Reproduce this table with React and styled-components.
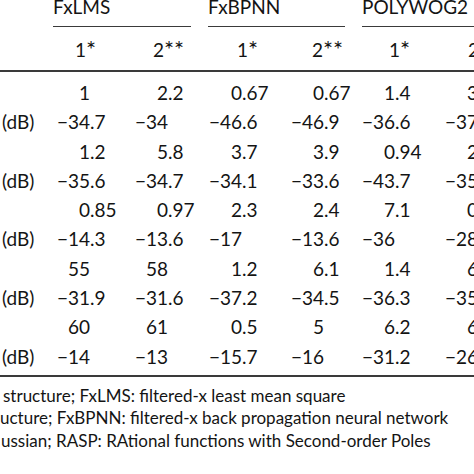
import styled, { createGlobalStyle } from 'styled-components';

const GlobalStyle = createGlobalStyle`
  html, body {
    margin: 0;
    padding: 0;
    background: #ffffff;
    overflow: hidden;
  }
  body {
    width: 474px;
    height: 474px;
    font-family: Lato, "Open Sans", sans-serif;
    color: #141414;
  }
`;

// value columns: label, then FxLMS 1/2, FxBPNN 1/2, POLYWOG2 1/2
const COLS = '50px 78px 74px 82px 71px 83px 80px';

const Table = styled.div`
  width: 520px;
  font-size: 19px;
`;

const HeadRow = styled.div`
  display: grid;
  grid-template-columns: 50px 152px 153px 163px;
  margin-top: -4px;
`;

const GroupHead = styled.div`
  padding-left: ${(p) => p.$left}px;
  padding-right: ${(p) => p.$right}px;
`;

const GroupTitle = styled.div`
  line-height: 22px;
  padding-bottom: 8px;
  border-bottom: 1px solid #3a3a3a;
  white-space: nowrap;
`;

const SubRow = styled.div`
  display: grid;
  grid-template-columns: ${COLS};
  padding: 8px 0 5px;
  line-height: 30px;
  border-bottom: 2px solid #3a3a3a;
`;

const SubCell = styled.div`
  padding-left: ${(p) => p.$pad}px;
  white-space: nowrap;
`;

const Star = styled.span`
  font-size: 1.25em;
  line-height: 0;
  vertical-align: -1px;
`;

const Body = styled.div`
  padding: 6px 0 4px;
  border-bottom: 2px solid #3a3a3a;
`;

const Row = styled.div`
  display: grid;
  grid-template-columns: ${COLS};
  height: 29.3px;
  line-height: 29.3px;
`;

const Label = styled.div`
  padding-left: 2px;
  white-space: nowrap;
`;

const Num = styled.div`
  display: flex;
  white-space: nowrap;
`;

const Int = styled.span`
  width: 40px;
  flex: none;
  text-align: right;
`;

const Frac = styled.span`
  text-align: left;
`;

const Footnotes = styled.div`
  margin-top: 8px;
  font-size: 17px;
  line-height: 22.5px;
  white-space: nowrap;
`;

const Note = styled.div`
  padding-left: ${(p) => p.$indent}px;
`;

const rows = [
  { label: '', vals: ['1', '2.2', '0.67', '0.67', '1.4', '3.1'] },
  { label: '(dB)', vals: ['−34.7', '−34', '−46.6', '−46.9', '−36.6', '−37.2'] },
  { label: '', vals: ['1.2', '5.8', '3.7', '3.9', '0.94', '2.3'] },
  { label: '(dB)', vals: ['−35.6', '−34.7', '−34.1', '−33.6', '−43.7', '−35.1'] },
  { label: '', vals: ['0.85', '0.97', '2.3', '2.4', '7.1', '0.9'] },
  { label: '(dB)', vals: ['−14.3', '−13.6', '−17', '−13.6', '−36', '−28.4'] },
  { label: '', vals: ['55', '58', '1.2', '6.1', '1.4', '6.2'] },
  { label: '(dB)', vals: ['−31.9', '−31.6', '−37.2', '−34.5', '−36.3', '−35.4'] },
  { label: '', vals: ['60', '61', '0.5', '5', '6.2', '6.1'] },
  { label: '(dB)', vals: ['−14', '−13', '−15.7', '−16', '−31.2', '−26.5'] },
];

const subHeads = [
  { num: '1', stars: '*', pad: 25 },
  { num: '2', stars: '**', pad: 25 },
  { num: '1', stars: '*', pad: 35 },
  { num: '2', stars: '**', pad: 28 },
  { num: '1', stars: '*', pad: 34 },
  { num: '2', stars: '**', pad: 30 },
];

function Value({ v }) {
  const dot = v.indexOf('.');
  const int = dot === -1 ? v : v.slice(0, dot);
  const frac = dot === -1 ? '' : v.slice(dot);
  return (
    <Num>
      <Int>{int}</Int>
      <Frac>{frac}</Frac>
    </Num>
  );
}

export default function App() {
  return (
    <>
      <GlobalStyle />
      <Table>
        <HeadRow>
          <div />
          <GroupHead $left={3} $right={11}>
            <GroupTitle>FxLMS</GroupTitle>
          </GroupHead>
          <GroupHead $left={6} $right={10}>
            <GroupTitle>FxBPNN</GroupTitle>
          </GroupHead>
          <GroupHead $left={7} $right={0}>
            <GroupTitle>POLYWOG2</GroupTitle>
          </GroupHead>
        </HeadRow>

        <SubRow>
          <div />
          {subHeads.map((h, i) => (
            <SubCell key={i} $pad={h.pad}>
              {h.num}
              <Star>{h.stars}</Star>
            </SubCell>
          ))}
        </SubRow>

        <Body>
          {rows.map((r, i) => (
            <Row key={i}>
              <Label>{r.label}</Label>
              {r.vals.map((v, j) => (
                <Value key={j} v={v} />
              ))}
            </Row>
          ))}
        </Body>

        <Footnotes>
          <Note $indent={3}>structure; FxLMS: filtered-x least mean square</Note>
          <Note $indent={0}>ucture; FxBPNN: filtered-x back propagation neural network</Note>
          <Note $indent={1}>ussian; RASP: RAtional functions with Second-order Poles</Note>
        </Footnotes>
      </Table>
    </>
  );
}
